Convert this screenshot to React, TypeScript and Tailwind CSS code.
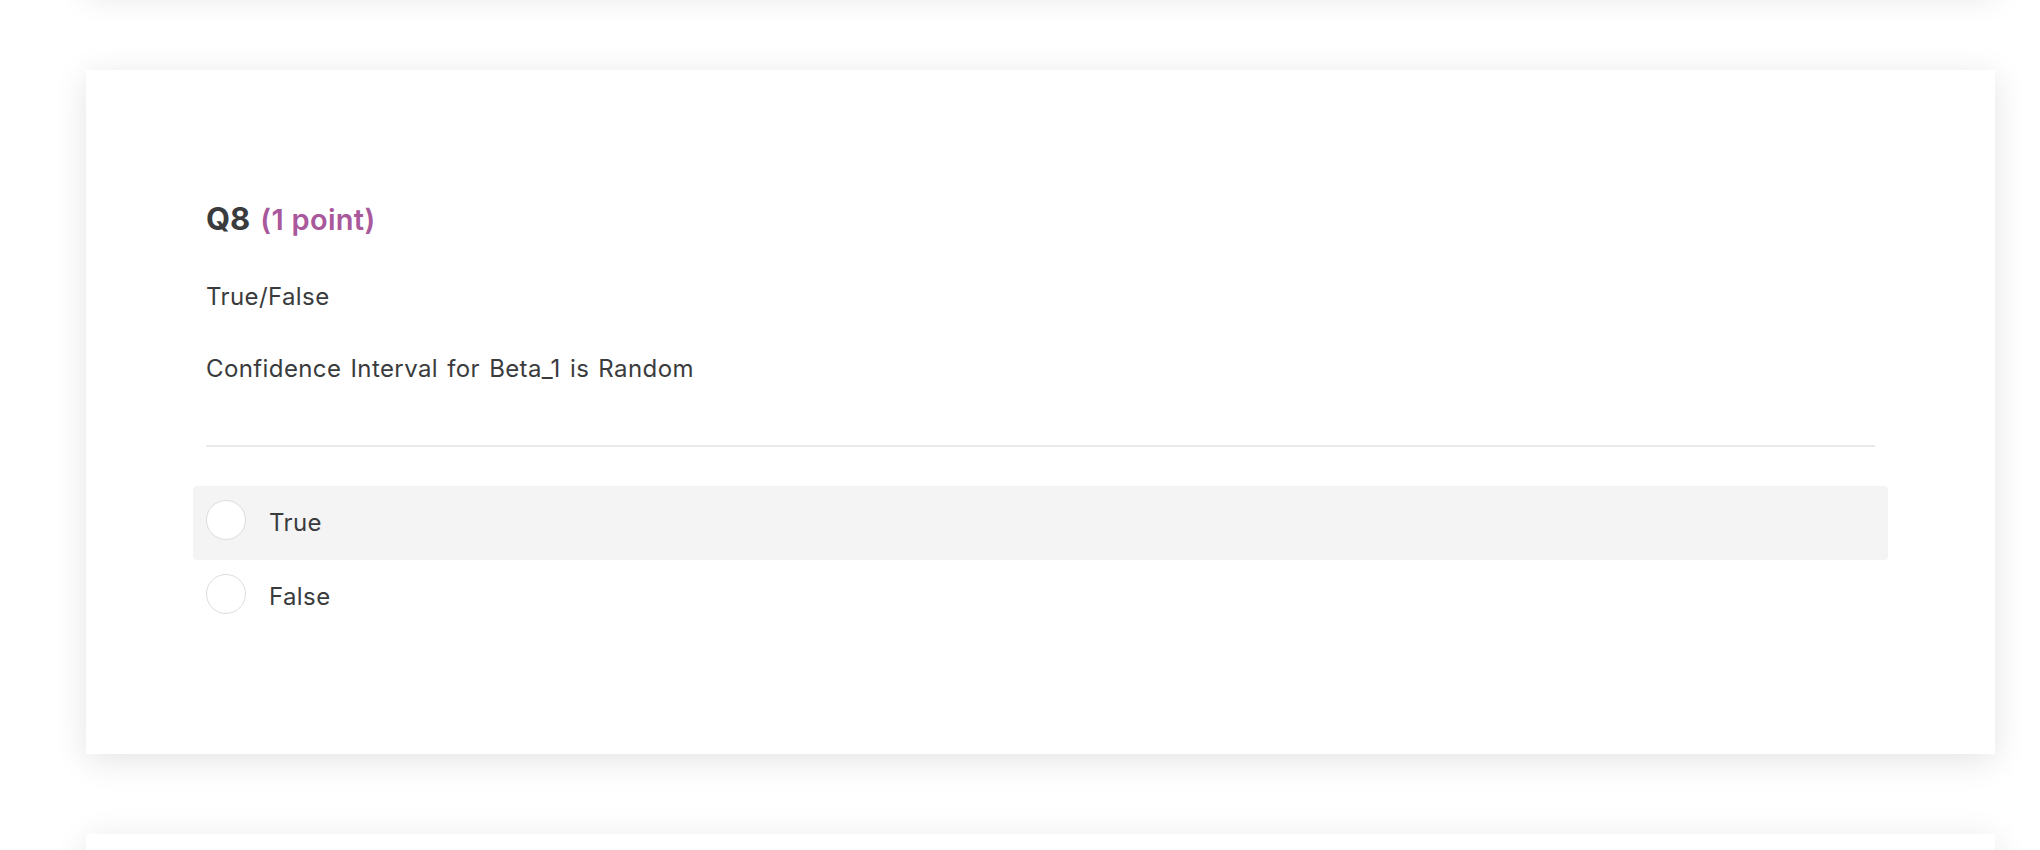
import React, { useState } from 'react';

// 문제 카드 하나에 들어가는 보기
const options = ['True', 'False'];

function Card({ children, className = '' }: { children?: React.ReactNode; className?: string }) {
  return (
    <div className={`w-[1909px] bg-white shadow-[0_6px_32px_rgba(0,0,0,0.11)] ${className}`}>
      {children}
    </div>
  );
}

export default function App() {
  const [hovered] = useState('True');
  const [selected, setSelected] = useState<string | null>(null);

  return (
    <div className="min-h-screen overflow-hidden bg-white font-['Inter','Liberation_Sans',sans-serif] text-[#3a3b3d]">
      <div className="ml-[86px] flex flex-col gap-[80px]">
        {/* 이전 문제 카드 (아래쪽만 보임) */}
        <Card className="-mt-[40px] h-[30px]" />

        {/* Q8 */}
        <Card className="px-[120px] pt-[129px] pb-[120px]">
          <h2 className="flex items-baseline gap-[10px] text-[31px] font-bold leading-[40px]">
            <span>Q8</span>
            <span className="text-[29px] font-semibold tracking-[0.3px] text-[#a8589b]">(1 point)</span>
          </h2>

          <div className="text-[24px] leading-[32px] tracking-[0.4px] [word-spacing:2px]">
            <p className="mt-[41px]">True/False</p>
            <p className="mt-[40px]">Confidence Interval for Beta_1 is Random</p>
          </div>

          <div className="mt-[60px] h-[2px] bg-[#e9e9e9]" />

          <div className="mt-[39px] flex flex-col">
            {options.map((opt) => (
              <label
                key={opt}
                onClick={() => setSelected(opt)}
                className={`-mx-[13px] flex cursor-pointer items-start rounded-[4px] px-[13px] pt-[14px] pb-[20px] ${
                  hovered === opt ? 'bg-[#f4f4f4]' : ''
                }`}
              >
                <span className="flex h-[40px] w-[40px] shrink-0 items-center justify-center rounded-full border border-[#dcdcdc] bg-white">
                  {selected === opt && <span className="h-[18px] w-[18px] rounded-full bg-[#a8589b]" />}
                </span>
                <span className="ml-[23px] mt-[7px] text-[24px] leading-[32px] tracking-[0.4px]">{opt}</span>
              </label>
            ))}
          </div>
        </Card>

        {/* 다음 문제 카드 (위쪽만 보임) */}
        <Card className="h-[200px]" />
      </div>
    </div>
  );
}
